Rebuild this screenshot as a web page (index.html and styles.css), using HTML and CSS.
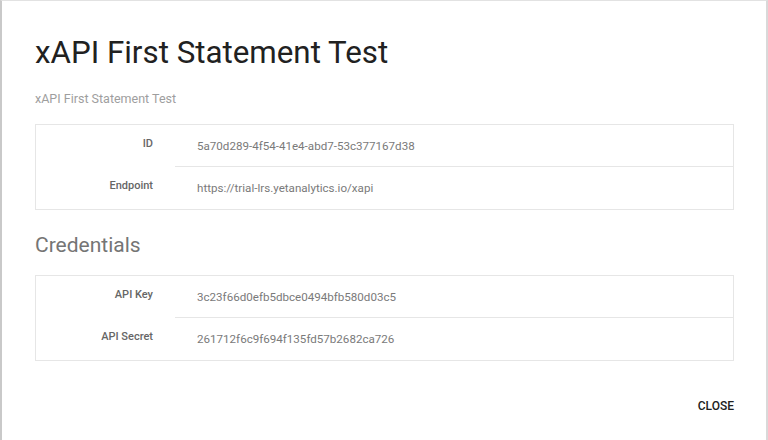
FILE: index.html
```html
<!DOCTYPE html>
<html lang="en">
<head>
<meta charset="utf-8">
<title>xAPI First Statement Test</title>
<link rel="stylesheet" href="styles.css">
</head>
<body>
<div class="dialog">
  <h1 class="title">xAPI First Statement Test</h1>
  <p class="subtitle">xAPI First Statement Test</p>
  <div class="table">
    <div class="row">
      <div class="label">ID</div>
      <div class="value">5a70d289-4f54-41e4-abd7-53c377167d38</div>
    </div>
    <div class="row">
      <div class="label">Endpoint</div>
      <div class="value">https://trial-lrs.yetanalytics.io/xapi</div>
    </div>
  </div>
  <h2 class="section">Credentials</h2>
  <div class="table">
    <div class="row">
      <div class="label">API Key</div>
      <div class="value">3c23f66d0efb5dbce0494bfb580d03c5</div>
    </div>
    <div class="row">
      <div class="label">API Secret</div>
      <div class="value">261712f6c9f694f135fd57b2682ca726</div>
    </div>
  </div>
  <div class="actions">
    <button class="btn">CLOSE</button>
  </div>
</div>
</body>
</html>
```
FILE: styles.css
```css
html, body {
  margin: 0;
  padding: 0;
  background: #ffffff;
}
body {
  font-family: Roboto, "Liberation Sans", Arial, sans-serif;
  width: 768px;
  height: 440px;
  overflow: hidden;
}
.dialog {
  box-sizing: border-box;
  width: 768px;
  height: 440px;
  border-top: 1px solid #e2e2e2;
  border-left: 2px solid #c9c9c9;
  border-right: 2px solid #d9d9d9;
  padding: 34px 32px 0 33px;
  display: flex;
  flex-direction: column;
}
.title {
  margin: 0;
  font-size: 31.3px;
  line-height: 36px;
  font-weight: 400;
  color: #212121;
}
.subtitle {
  margin: 20px 0 0;
  font-size: 12.5px;
  line-height: 16px;
  color: #9e9e9e;
}
.table {
  margin-top: 17px;
  border: 1px solid #e6e6e6;
  display: flex;
  flex-direction: column;
}
.row {
  display: flex;
  height: 41px;
}
.row + .row {
  height: 43px;
}
.row + .row .value {
  border-top: 1px solid #e6e6e6;
}
.label {
  width: 117px;
  flex: none;
  padding: 11px 22px 0 0;
  text-align: right;
  font-size: 11px;
  line-height: 16px;
  font-weight: 500;
  color: #666666;
}
.row + .row .label {
  padding-top: 12px;
}
.value {
  flex: 1;
  display: flex;
  align-items: center;
  padding-left: 22px;
  font-size: 11.6px;
  color: #7a7a7a;
}
.section {
  margin: 21px 0 0;
  font-size: 21px;
  line-height: 28px;
  font-weight: 400;
  color: #757575;
}
.section + .table {
  margin-top: 16px;
}
.actions {
  margin-top: 27px;
  display: flex;
  justify-content: flex-end;
}
.btn {
  height: 36px;
  padding: 0 8px;
  margin-right: -8px;
  border: 0;
  background: transparent;
  font-family: Roboto, "Liberation Sans", Arial, sans-serif;
  font-size: 12px;
  font-weight: 500;
  color: #212121;
  cursor: pointer;
}
```
